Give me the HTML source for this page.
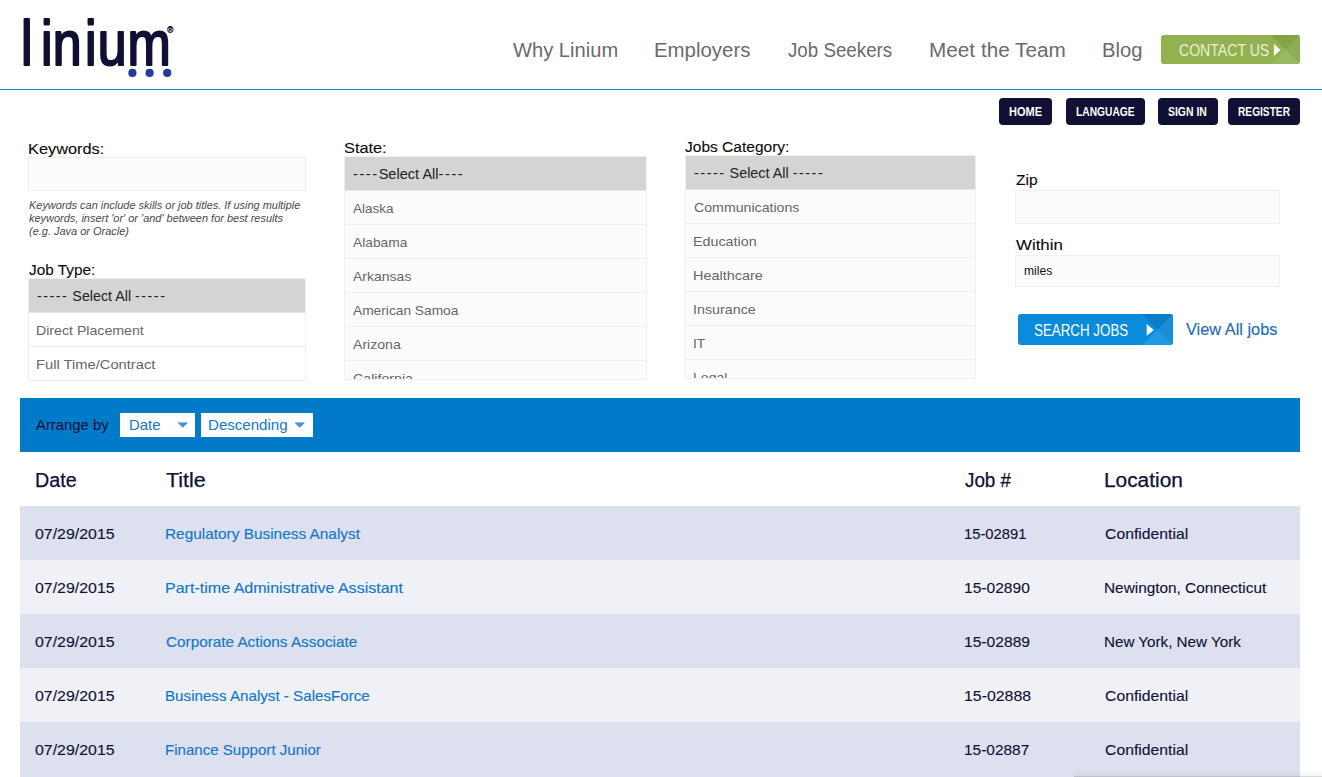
<!DOCTYPE html>
<html lang="en"><head><meta charset="utf-8"><title>Linium - Job Search</title>
<style>
*{box-sizing:border-box}
html,body{margin:0;padding:0}
body{width:1322px;height:777px;position:relative;overflow:hidden;background:#fff;
 font-family:"Liberation Sans",sans-serif;}
div,span,a,svg,h1,label,button,li,ul.list{position:absolute;display:block;margin:0;padding:0}
header,nav,form,section,ul.menu,ul.menu>li,fieldset{display:contents}
button{border:0;font:inherit}
.t{white-space:nowrap;transform-origin:0 0;line-height:normal;text-decoration:none}
.d{font-style:normal;letter-spacing:1.5px}
.inp{background:#fcfcfc;border:1px solid #efefef}
.list{background:#fcfcfc;border:1px solid #efefef;overflow:hidden;list-style:none}
.list li{left:0;width:100%;height:34px;border-bottom:1px solid #eee}
.list li.sel{background:#d4d4d4;border-bottom-color:#e6e6e6}
.btn{background:#0f1034;border-radius:4px}
.row{left:20px;width:1280px;height:54px}
.odd{background:#dde1ef}
.even{background:#eff1f7}
</style></head>
<body>
<header>
<h1 style="left:0;top:0;width:200px;height:88px"><svg style="left:0;top:0" width="200" height="88" viewBox="0 0 200 88"><text transform="scale(0.83,1)" x="25.18 49.28 63.61 102.41 117.83 153.73" y="64.8" font-family="Liberation Sans, sans-serif" font-size="62.5" font-weight="400" fill="#0f1034" stroke="#0f1034" stroke-width="2.2" stroke-linejoin="round">linium</text><circle cx="132.4" cy="72.9" r="4.1" fill="#27399b"/><circle cx="149.6" cy="72.9" r="4.1" fill="#27399b"/><circle cx="167.2" cy="72.9" r="4.1" fill="#27399b"/><text x="170.3" y="32.7" font-size="8.2" font-weight="400" text-anchor="middle" fill="#0f1034" stroke="#0f1034" stroke-width="0.35" font-family="Liberation Sans, sans-serif">&#174;</text></svg></h1>
<nav><ul class="menu">
<li><a class="t" style="left:513.41px;top:39px;font-size:19.5px;color:#6a6a6a;transform:scaleX(1.0327);">Why Linium</a></li>
<li><a class="t" style="left:654.46px;top:39px;font-size:19.5px;color:#6a6a6a;transform:scaleX(1.0466);">Employers</a></li>
<li><a class="t" style="left:788.41px;top:39px;font-size:19.5px;color:#6a6a6a;transform:scaleX(0.9612);">Job Seekers</a></li>
<li><a class="t" style="left:929.46px;top:39px;font-size:19.5px;color:#6a6a6a;transform:scaleX(1.0637);">Meet the Team</a></li>
<li><a class="t" style="left:1102.12px;top:39px;font-size:19.5px;color:#6a6a6a;transform:scaleX(1.0373);">Blog</a></li>
</ul>
<div style="left:1161px;top:35px;width:139px;height:29px;background:#93b24f;border-radius:3px;overflow:hidden"><svg style="left:110px;top:0" width="29" height="29" viewBox="0 0 29 29"><polygon points="0,0 29,0 14.5,14.5" fill="#84a244"/><polygon points="29,0 29,29 14.5,14.5" fill="#8fac58"/><polygon points="0,29 29,29 14.5,14.5" fill="#9bb95e"/><polygon points="2.9,8.8 9.5,14.9 2.9,21" fill="#fff"/></svg><a class="t" style="left:17.87px;top:7px;font-size:16px;color:rgba(255,255,255,.82);transform:scaleX(0.8798);">CONTACT US</a></div>
</nav>
<div style="left:0px;top:89px;width:1322px;height:1px;background:#0c8cda"></div>
</header>
<nav>
<div class="btn" style="left:999px;top:98px;width:53px;height:27px;"><a class="t" style="left:10.38px;top:7px;font-size:12.5px;color:#fff;font-weight:700;transform:scaleX(0.8800);">HOME</a></div>
<div class="btn" style="left:1066px;top:98px;width:79px;height:27px;"><a class="t" style="left:9.62px;top:7px;font-size:12.5px;color:#fff;font-weight:700;transform:scaleX(0.8193);">LANGUAGE</a></div>
<div class="btn" style="left:1158px;top:98px;width:60px;height:27px;"><a class="t" style="left:10.33px;top:7px;font-size:12.5px;color:#fff;font-weight:700;transform:scaleX(0.8338);">SIGN IN</a></div>
<div class="btn" style="left:1228px;top:98px;width:72px;height:27px;"><a class="t" style="left:9.92px;top:7px;font-size:12.5px;color:#fff;font-weight:700;transform:scaleX(0.8137);">REGISTER</a></div>
</nav>
<form>
<span class="t" style="left:28.18px;top:140px;font-size:15.5px;color:#0c0c0c;-webkit-text-stroke:0.12px;transform:scaleX(1.0538);">Keywords:</span><div class="inp" style="left:28px;top:157px;width:278px;height:34px;"></div>
<span class="t" style="left:29.32px;top:199px;font-size:11px;color:#484848;font-style:italic;transform:scaleX(0.9953);">Keywords can include skills or job titles. If using multiple</span>
<span class="t" style="left:29.32px;top:212px;font-size:11px;color:#484848;font-style:italic;transform:scaleX(0.9969);">keywords, insert 'or' or 'and' between for best results</span>
<span class="t" style="left:29.32px;top:225px;font-size:11px;color:#484848;font-style:italic;transform:scaleX(0.9974);">(e.g. Java or Oracle)</span>
<span class="t" style="left:29.18px;top:261px;font-size:15.5px;color:#0c0c0c;-webkit-text-stroke:0.12px;transform:scaleX(0.9891);">Job Type:</span>
<ul class="list" style="left:28px;top:278px;width:278px;height:103px;background:#fff"><li class="sel" style="top:0px"><span class="t" style="left:8.48px;top:9px;font-size:14px;color:#222;transform:scaleX(1.0191);"><i class="d">-----</i> Select All <i class="d">-----</i></span></li><li style="top:34px"><span class="t" style="left:7.49px;top:10px;font-size:13.5px;color:#666;transform:scaleX(1.0487);">Direct Placement</span></li><li style="top:68px"><span class="t" style="left:7.49px;top:10px;font-size:13.5px;color:#666;transform:scaleX(1.0902);">Full Time/Contract</span></li></ul>
<span class="t" style="left:344.29px;top:139px;font-size:15.5px;color:#0c0c0c;-webkit-text-stroke:0.12px;transform:scaleX(1.0524);">State:</span>
<ul class="list" style="left:344px;top:156px;width:303px;height:224px;"><li class="sel" style="top:0px"><span class="t" style="left:7.58px;top:9px;font-size:14px;color:#222;transform:scaleX(1.0404);"><i class="d">----</i>Select All<i class="d">----</i></span></li><li style="top:34px"><span class="t" style="left:7.60px;top:10px;font-size:13.5px;color:#666;transform:scaleX(1.0021);">Alaska</span></li><li style="top:68px"><span class="t" style="left:7.60px;top:10px;font-size:13.5px;color:#666;transform:scaleX(1.0209);">Alabama</span></li><li style="top:102px"><span class="t" style="left:7.60px;top:10px;font-size:13.5px;color:#666;transform:scaleX(1.0377);">Arkansas</span></li><li style="top:136px"><span class="t" style="left:7.60px;top:10px;font-size:13.5px;color:#666;transform:scaleX(1.0179);">American Samoa</span></li><li style="top:170px"><span class="t" style="left:7.60px;top:10px;font-size:13.5px;color:#666;transform:scaleX(1.0443);">Arizona</span></li><li style="top:204px"><span class="t" style="left:7.60px;top:10px;font-size:13.5px;color:#666;transform:scaleX(1.0521);">California</span></li></ul>
<span class="t" style="left:685.49px;top:138px;font-size:15.5px;color:#0c0c0c;-webkit-text-stroke:0.12px;transform:scaleX(1.0015);">Jobs Category:</span>
<ul class="list" style="left:685px;top:155px;width:291px;height:224px;"><li class="sel" style="top:0px"><span class="t" style="left:8.33px;top:9px;font-size:14px;color:#222;transform:scaleX(1.0254);"><i class="d">-----</i> Select All <i class="d">-----</i></span></li><li style="top:34px"><span class="t" style="left:8.35px;top:10px;font-size:13.5px;color:#666;transform:scaleX(1.0483);">Communications</span></li><li style="top:68px"><span class="t" style="left:7.35px;top:10px;font-size:13.5px;color:#666;transform:scaleX(1.0598);">Education</span></li><li style="top:102px"><span class="t" style="left:7.35px;top:10px;font-size:13.5px;color:#666;transform:scaleX(1.0692);">Healthcare</span></li><li style="top:136px"><span class="t" style="left:7.35px;top:10px;font-size:13.5px;color:#666;transform:scaleX(1.0594);">Insurance</span></li><li style="top:170px"><span class="t" style="left:7.35px;top:10px;font-size:13.5px;color:#666;transform:scaleX(1.0038);">IT</span></li><li style="top:204px"><span class="t" style="left:7.35px;top:10px;font-size:13.5px;color:#666;transform:scaleX(1.0423);">Legal</span></li></ul>
<span class="t" style="left:1015.63px;top:171px;font-size:15.5px;color:#0c0c0c;-webkit-text-stroke:0.12px;transform:scaleX(1.0033);">Zip</span><div class="inp" style="left:1015px;top:190px;width:265px;height:34px;"></div>
<span class="t" style="left:1015.63px;top:236px;font-size:15.5px;color:#0c0c0c;-webkit-text-stroke:0.12px;transform:scaleX(1.0866);">Within</span><div class="inp" style="left:1015px;top:255px;width:265px;height:32px;"><span class="t" style="left:7.99px;top:8px;font-size:12px;color:#111;transform:scaleX(1.0072);">miles</span></div>
<button style="left:1018px;top:314px;width:155px;height:31px;background:#0a8bdc;border-radius:3px;overflow:hidden"><svg style="left:124px;top:0" width="31" height="31" viewBox="0 0 31 31"><polygon points="0,0 31,0 15.5,15.5" fill="#0a7cc8"/><polygon points="31,0 31,31 15.5,15.5" fill="#1b8dd6"/><polygon points="0,31 31,31 15.5,15.5" fill="#1f99e2"/><polygon points="4.7,10.1 11.8,15.9 4.7,21.7" fill="#fff"/></svg><span class="t" style="left:15.62px;top:8px;font-size:16px;color:#fff;transform:scaleX(0.8342);">SEARCH JOBS</span></button>
<a class="t" style="left:1185.62px;top:321px;font-size:16px;color:#1f6cb7;-webkit-text-stroke:0.15px;transform:scaleX(1.0209);">View All jobs</a>
</form>
<section>
<div style="left:20px;top:398px;width:1280px;height:54px;background:#007ac9"><span class="t" style="left:16.28px;top:19px;font-size:14px;color:#0f1034;transform:scaleX(1.0601);">Arrange by</span><div style="left:100px;top:15px;width:75px;height:24px;background:#fff"><svg style="left:56.5px;top:9px" width="13" height="7" viewBox="0 0 13 7"><path d="M1.3 0.9 L10.3 0.9 L5.8 5.2 Z" fill="#4a90e2" stroke="#4a90e2" stroke-width="1" stroke-linejoin="round"/></svg><span class="t" style="left:8.56px;top:4px;font-size:14.5px;color:#1277c8;transform:scaleX(1.0264);">Date</span></div><div style="left:181px;top:15px;width:112px;height:24px;background:#fff"><svg style="left:93px;top:9px" width="13" height="7" viewBox="0 0 13 7"><path d="M1.3 0.9 L10.3 0.9 L5.8 5.2 Z" fill="#4a90e2" stroke="#4a90e2" stroke-width="1" stroke-linejoin="round"/></svg><span class="t" style="left:7.26px;top:4px;font-size:14.5px;color:#1277c8;transform:scaleX(1.0398);">Descending</span></div></div>
</section>
<section>
<div style="left:20px;top:452px;width:1280px;height:54px;"><span class="t" style="left:15.41px;top:17px;font-size:19.5px;color:#0f1034;-webkit-text-stroke:0.25px;transform:scaleX(1.0100);">Date</span><span class="t" style="left:146.41px;top:17px;font-size:19.5px;color:#0f1034;-webkit-text-stroke:0.25px;transform:scaleX(1.1019);">Title</span><span class="t" style="left:945.41px;top:17px;font-size:19.5px;color:#0f1034;-webkit-text-stroke:0.25px;transform:scaleX(0.9645);">Job #</span><span class="t" style="left:1084.12px;top:17px;font-size:19.5px;color:#0f1034;-webkit-text-stroke:0.25px;transform:scaleX(1.0691);">Location</span></div>
<div class="row odd" style="top:506px"><span class="t" style="left:15.45px;top:19px;font-size:15px;color:#0f1034;-webkit-text-stroke:0.12px;transform:scaleX(1.0603);">07/29/2015</span><a class="t" style="left:144.60px;top:19px;font-size:15px;color:#1277c8;-webkit-text-stroke:0.15px;transform:scaleX(1.0257);">Regulatory Business Analyst</a><span class="t" style="left:943.55px;top:19px;font-size:15px;color:#0f1034;-webkit-text-stroke:0.12px;transform:scaleX(0.9843);">15-02891</span><span class="t" style="left:1085.25px;top:19px;font-size:15px;color:#0f1034;-webkit-text-stroke:0.12px;transform:scaleX(1.0503);">Confidential</span></div>
<div class="row even" style="top:560px"><span class="t" style="left:15.45px;top:19px;font-size:15px;color:#0f1034;-webkit-text-stroke:0.12px;transform:scaleX(1.0603);">07/29/2015</span><a class="t" style="left:144.60px;top:19px;font-size:15px;color:#1277c8;-webkit-text-stroke:0.15px;transform:scaleX(1.0693);">Part-time Administrative Assistant</a><span class="t" style="left:943.55px;top:19px;font-size:15px;color:#0f1034;-webkit-text-stroke:0.12px;transform:scaleX(1.0380);">15-02890</span><span class="t" style="left:1084.25px;top:19px;font-size:15px;color:#0f1034;-webkit-text-stroke:0.12px;transform:scaleX(1.0238);">Newington, Connecticut</span></div>
<div class="row odd" style="top:614px"><span class="t" style="left:15.45px;top:19px;font-size:15px;color:#0f1034;-webkit-text-stroke:0.12px;transform:scaleX(1.0603);">07/29/2015</span><a class="t" style="left:145.60px;top:19px;font-size:15px;color:#1277c8;-webkit-text-stroke:0.15px;transform:scaleX(1.0191);">Corporate Actions Associate</a><span class="t" style="left:943.55px;top:19px;font-size:15px;color:#0f1034;-webkit-text-stroke:0.12px;transform:scaleX(1.0412);">15-02889</span><span class="t" style="left:1084.25px;top:19px;font-size:15px;color:#0f1034;-webkit-text-stroke:0.12px;transform:scaleX(1.0128);">New York, New York</span></div>
<div class="row even" style="top:668px"><span class="t" style="left:15.45px;top:19px;font-size:15px;color:#0f1034;-webkit-text-stroke:0.12px;transform:scaleX(1.0603);">07/29/2015</span><a class="t" style="left:144.60px;top:19px;font-size:15px;color:#1277c8;-webkit-text-stroke:0.15px;transform:scaleX(1.0109);">Business Analyst - SalesForce</a><span class="t" style="left:943.55px;top:19px;font-size:15px;color:#0f1034;-webkit-text-stroke:0.12px;transform:scaleX(1.0573);">15-02888</span><span class="t" style="left:1085.25px;top:19px;font-size:15px;color:#0f1034;-webkit-text-stroke:0.12px;transform:scaleX(1.0503);">Confidential</span></div>
<div class="row odd" style="top:722px;height:55px"><span class="t" style="left:15.45px;top:19px;font-size:15px;color:#0f1034;-webkit-text-stroke:0.12px;transform:scaleX(1.0603);">07/29/2015</span><a class="t" style="left:144.60px;top:19px;font-size:15px;color:#1277c8;-webkit-text-stroke:0.15px;transform:scaleX(1.0046);">Finance Support Junior</a><span class="t" style="left:943.55px;top:19px;font-size:15px;color:#0f1034;-webkit-text-stroke:0.12px;transform:scaleX(1.0287);">15-02887</span><span class="t" style="left:1085.25px;top:19px;font-size:15px;color:#0f1034;-webkit-text-stroke:0.12px;transform:scaleX(1.0503);">Confidential</span></div>
</section>
<div style="left:1074px;top:770px;width:248px;height:7px;background:linear-gradient(to bottom,rgba(0,0,0,0),rgba(0,0,0,.05))"></div><div style="left:1074px;top:776px;width:248px;height:1px;background:rgba(0,0,0,.1)"></div>
</body></html>
